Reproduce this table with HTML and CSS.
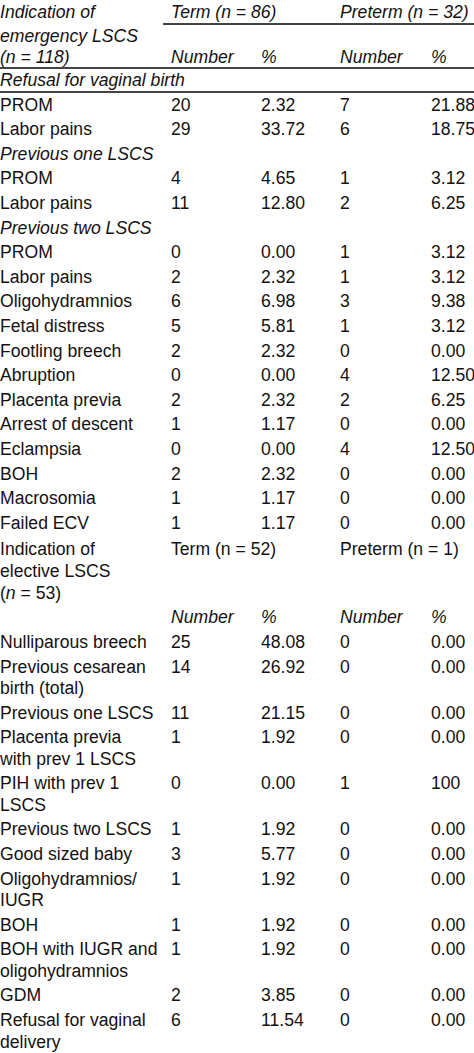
FILE: index.html
```html
<!DOCTYPE html>
<html lang="en">
<head>
<meta charset="utf-8">
<title>Indications of LSCS</title>
<link rel="stylesheet" href="styles.css">
</head>
<body>
<table class="data">
  <colgroup>
    <col class="c-ind">
    <col class="c-n1">
    <col class="c-p1">
    <col class="c-n2">
    <col class="c-p2">
  </colgroup>
  <thead>
    <tr class="head-top">
      <th class="it">Indication of</th>
      <th colspan="2" class="it grp">Term (n = 86)</th>
      <th colspan="2" class="it grp">Preterm (n = 32)</th>
    </tr>
    <tr class="head-sub">
      <th class="it rule bottom">emergency LSCS<br>(n = 118)</th>
      <th class="it rule bottom">Number</th>
      <th class="it rule bottom">%</th>
      <th class="it rule bottom">Number</th>
      <th class="it rule bottom">%</th>
    </tr>
  </thead>
  <tbody>
    <tr class="rule"><td colspan="5" class="it">Refusal for vaginal birth</td></tr>
    <tr><td>PROM</td><td>20</td><td>2.32</td><td>7</td><td>21.88</td></tr>
    <tr><td>Labor pains</td><td>29</td><td>33.72</td><td>6</td><td>18.75</td></tr>
    <tr><td colspan="5" class="it">Previous one LSCS</td></tr>
    <tr><td>PROM</td><td>4</td><td>4.65</td><td>1</td><td>3.12</td></tr>
    <tr><td>Labor pains</td><td>11</td><td>12.80</td><td>2</td><td>6.25</td></tr>
    <tr><td colspan="5" class="it">Previous two LSCS</td></tr>
    <tr><td>PROM</td><td>0</td><td>0.00</td><td>1</td><td>3.12</td></tr>
    <tr><td>Labor pains</td><td>2</td><td>2.32</td><td>1</td><td>3.12</td></tr>
    <tr><td>Oligohydramnios</td><td>6</td><td>6.98</td><td>3</td><td>9.38</td></tr>
    <tr><td>Fetal distress</td><td>5</td><td>5.81</td><td>1</td><td>3.12</td></tr>
    <tr><td>Footling breech</td><td>2</td><td>2.32</td><td>0</td><td>0.00</td></tr>
    <tr><td>Abruption</td><td>0</td><td>0.00</td><td>4</td><td>12.50</td></tr>
    <tr><td>Placenta previa</td><td>2</td><td>2.32</td><td>2</td><td>6.25</td></tr>
    <tr><td>Arrest of descent</td><td>1</td><td>1.17</td><td>0</td><td>0.00</td></tr>
    <tr><td>Eclampsia</td><td>0</td><td>0.00</td><td>4</td><td>12.50</td></tr>
    <tr><td>BOH</td><td>2</td><td>2.32</td><td>0</td><td>0.00</td></tr>
    <tr><td>Macrosomia</td><td>1</td><td>1.17</td><td>0</td><td>0.00</td></tr>
    <tr><td>Failed ECV</td><td>1</td><td>1.17</td><td>0</td><td>0.00</td></tr>
    <tr class="sec2">
      <td>Indication of<br>elective LSCS<br>(<i>n</i> = 53)</td>
      <td colspan="2">Term (n = 52)</td>
      <td colspan="2">Preterm (n = 1)</td>
    </tr>
    <tr><td></td><td class="it">Number</td><td class="it">%</td><td class="it">Number</td><td class="it">%</td></tr>
    <tr><td>Nulliparous breech</td><td>25</td><td>48.08</td><td>0</td><td>0.00</td></tr>
    <tr><td>Previous cesarean<br>birth (total)</td><td>14</td><td>26.92</td><td>0</td><td>0.00</td></tr>
    <tr><td>Previous one LSCS</td><td>11</td><td>21.15</td><td>0</td><td>0.00</td></tr>
    <tr><td>Placenta previa<br>with prev 1 LSCS</td><td>1</td><td>1.92</td><td>0</td><td>0.00</td></tr>
    <tr><td>PIH with prev 1<br>LSCS</td><td>0</td><td>0.00</td><td>1</td><td>100</td></tr>
    <tr><td>Previous two LSCS</td><td>1</td><td>1.92</td><td>0</td><td>0.00</td></tr>
    <tr><td>Good sized baby</td><td>3</td><td>5.77</td><td>0</td><td>0.00</td></tr>
    <tr><td>Oligohydramnios/<br>IUGR</td><td>1</td><td>1.92</td><td>0</td><td>0.00</td></tr>
    <tr><td>BOH</td><td>1</td><td>1.92</td><td>0</td><td>0.00</td></tr>
    <tr><td>BOH with IUGR and<br>oligohydramnios</td><td>1</td><td>1.92</td><td>0</td><td>0.00</td></tr>
    <tr><td>GDM</td><td>2</td><td>3.85</td><td>0</td><td>0.00</td></tr>
    <tr><td>Refusal for vaginal<br>delivery</td><td>6</td><td>11.54</td><td>0</td><td>0.00</td></tr>
  </tbody>
</table>
</body>
</html>
```

FILE: styles.css
```css
html, body {
  margin: 0;
  padding: 0;
  background: #ffffff;
  overflow: hidden;
}

body {
  font-family: "Liberation Sans", Arial, sans-serif;
  font-size: 17.6px;
  color: #141112;
}

.data {
  border-collapse: collapse;
  table-layout: fixed;
  width: 511px;
  margin-left: -8px;
}

.c-ind { width: 171px; }
.c-n1 { width: 90px; }
.c-p1 { width: 79px; }
.c-n2 { width: 91px; }
.c-p2 { width: 80px; }

.data th,
.data td {
  padding: 1.55px 0 1.55px 8px;
  line-height: 21.5px;
  text-align: left;
  vertical-align: top;
  font-weight: normal;
  white-space: nowrap;
}

.data .head-top th {
  padding-bottom: 0;
}

.data .head-sub th {
  padding-top: 2px;
  padding-bottom: 0;
  line-height: 20.5px;
}

.data tr.rule td {
  padding-top: 1px;
  padding-bottom: 0;
  line-height: 21px;
  border-bottom: 2px solid #444444;
}

.data tr.sec2 td {
  padding-top: 2.55px;
  line-height: 22px;
}

.data .it {
  font-style: italic;
}

.data th.grp,
.data th.rule {
  border-bottom: 2px solid #444444;
}

.data th.bottom {
  vertical-align: bottom;
}
```
